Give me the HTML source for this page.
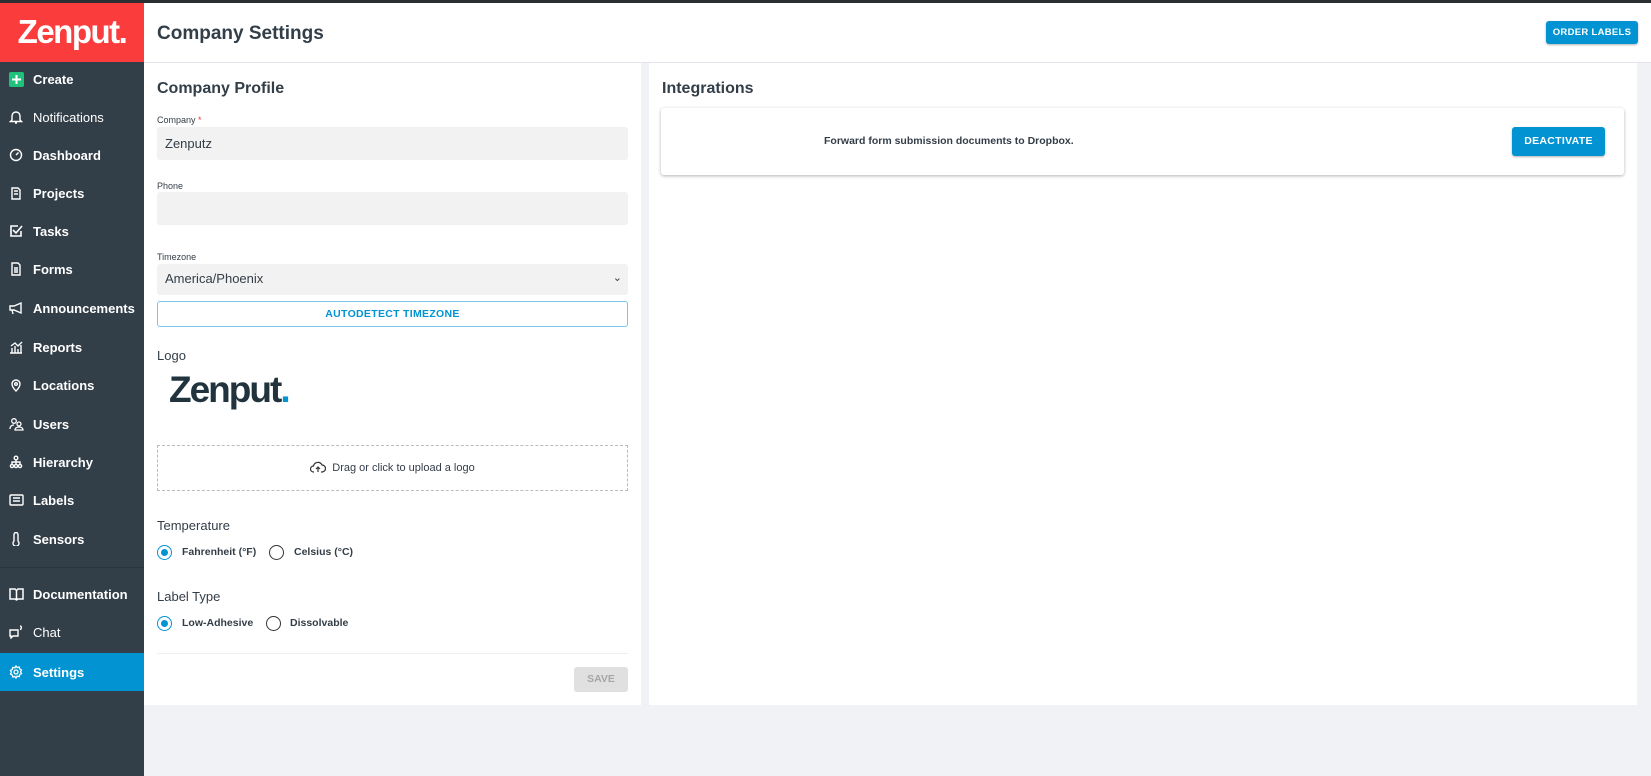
<!DOCTYPE html>
<html><head><meta charset="utf-8"><style>
*{box-sizing:border-box;margin:0;padding:0}
body{width:1651px;height:776px;overflow:hidden;background:#f1f2f5;font-family:"Liberation Sans",Arial,sans-serif;position:relative;color:#333d47}
.abs{position:absolute}
#top{left:0;top:0;width:1651px;height:3px;background:#2b2f33}
#side{left:0;top:3px;width:144px;height:773px;background:#323e48}
#logo{left:0;top:0;width:144px;height:59px;background:#fb3c3c;color:#fff;font-size:33px;font-weight:bold;letter-spacing:-1.5px;text-align:center;line-height:58px}
.nav{position:absolute;left:0;width:144px;height:38px;color:#fff;font-size:13px;font-weight:bold;line-height:40px;padding-left:33px}
.nav svg{position:absolute;left:9px;top:12px}
#hdr{left:144px;top:3px;width:1507px;height:60px;background:#fff;border-bottom:1px solid #e3e5ea}
h1{position:absolute;left:13px;top:20px;font-size:19px;font-weight:bold;color:#323e48}
.btn{position:absolute;background:#0293d2;color:#fff;font-size:10px;font-weight:bold;text-align:center;border-radius:3px;box-shadow:0 1px 2px rgba(0,0,0,.3);letter-spacing:.3px}
.panel{background:#fff}
.lbl{position:absolute;left:157px;font-size:9px;color:#333d47}
.inp{position:absolute;left:157px;width:471px;background:#f2f2f2;border-radius:3px;font-size:13px;padding-left:8px}
.h2{position:absolute;font-size:16px;font-weight:bold;color:#323e48}
.sec{position:absolute;left:157px;font-size:13px;color:#333d47}
.radio{position:absolute;width:15px;height:15px;border-radius:50%;border:1.5px solid #333}
.radio.on{border-color:#0293d2}
.radio.on::after{content:"";position:absolute;left:2.5px;top:2.5px;width:7px;height:7px;border-radius:50%;background:#0293d2}
.rl{position:absolute;font-size:10.5px;font-weight:bold;color:#333d47}
</style></head><body>
<div id="top" class="abs"></div>
<div id="side" class="abs">
<div id="logo" class="abs">Zenput.</div>
<div class="nav" style="top:57px"><svg width="15" height="15"><rect width="15" height="15" rx="2" fill="#1fc27a"/><path d="M7.5 3v9M3 7.5h9" stroke="#fff" stroke-width="2"/></svg>Create</div>
<div class="nav" style="top:95px;font-weight:normal"><svg width="14" height="14" fill="none" stroke="#fff" stroke-width="1.4"><path d="M3 10V6a4 4 0 0 1 8 0v4l1.5 1.5h-11zM6 13h2"/></svg>Notifications</div>
<div class="nav" style="top:133px"><svg width="14" height="14" fill="none" stroke="#fff" stroke-width="1.4"><circle cx="7" cy="7" r="5.5"/><path d="M7 7l2.5-2.5"/></svg>Dashboard</div>
<div class="nav" style="top:171px"><svg width="14" height="14" fill="none" stroke="#fff" stroke-width="1.4"><path d="M3 2h6l2 2v9H3zM5 5h4M5 8h4"/></svg>Projects</div>
<div class="nav" style="top:209px"><svg width="14" height="14" fill="none" stroke="#fff" stroke-width="1.6"><path d="M12 7v5H2V2h7M4 6l3 3 6-7"/></svg>Tasks</div>
<div class="nav" style="top:247px"><svg width="14" height="14" fill="none" stroke="#fff" stroke-width="1.4"><path d="M3 1h6l2 2v10H3zM5 6h4M5 8h4M5 10h4"/></svg>Forms</div>
<div class="nav" style="top:286px"><svg width="15" height="14" fill="none" stroke="#fff" stroke-width="1.4"><path d="M1 5h4l7-3v10L5 9H1zM3 9l1 4"/></svg>Announcements</div>
<div class="nav" style="top:325px"><svg width="14" height="14" fill="none" stroke="#fff" stroke-width="1.4"><path d="M1 13h12M3 13V8M6 13V6M9 13V9M12 13V5M2 6l4-3 3 3 4-4"/></svg>Reports</div>
<div class="nav" style="top:363px"><svg width="14" height="14" fill="none" stroke="#fff" stroke-width="1.4"><path d="M7 13s-4-4-4-7a4 4 0 0 1 8 0c0 3-4 7-4 7z"/><circle cx="7" cy="6" r="1.3"/></svg>Locations</div>
<div class="nav" style="top:402px"><svg width="15" height="14" fill="none" stroke="#fff" stroke-width="1.3"><circle cx="5" cy="4" r="2.3"/><circle cx="10" cy="7" r="2"/><path d="M1 12c0-3 2-4 4-4M6 13c0-2 2-3 4-3s4 1 4 3z"/></svg>Users</div>
<div class="nav" style="top:440px"><svg width="14" height="14" fill="none" stroke="#fff" stroke-width="1.4"><circle cx="7" cy="3" r="1.8"/><circle cx="3" cy="11" r="1.6"/><circle cx="7" cy="11" r="1.6"/><circle cx="11" cy="11" r="1.6"/><path d="M7 5v4M3 9V7h8v2"/></svg>Hierarchy</div>
<div class="nav" style="top:478px"><svg width="15" height="14" fill="none" stroke="#fff" stroke-width="1.4"><rect x="1" y="2" width="13" height="10" rx="1"/><path d="M4 5h7M4 8h7"/></svg>Labels</div>
<div class="nav" style="top:517px"><svg width="14" height="14" fill="none" stroke="#fff" stroke-width="1.4"><path d="M5 9V2.5a2 2 0 0 1 4 0V9a3 3 0 1 1-4 0z"/></svg>Sensors</div>
<div class="abs" style="left:0;top:564px;width:144px;height:1px;background:#2a343d"></div>
<div class="nav" style="top:572px"><svg width="15" height="14" fill="none" stroke="#fff" stroke-width="1.5"><path d="M1 2h5l1.5 1.5L9 2h5v10H9l-1.5 1L6 12H1zM7.5 3.5V12"/></svg>Documentation</div>
<div class="nav" style="top:610px;font-weight:normal"><svg width="15" height="14" fill="none" stroke="#fff" stroke-width="1.4"><path d="M1 5h8v6H4l-2 2V11H1zM11 1a1.5 1.5 0 0 1 1 2.5L11.5 5"/></svg>Chat</div>
<div class="nav" style="top:650px;background:#0293d2"><svg width="14" height="14" fill="none" stroke="#fff" stroke-width="1.3"><circle cx="7" cy="7" r="2"/><path d="M7 1l1.2 1.5 2-.5.5 2 1.8 1-1 1.8 1 1.8-1.8 1-.5 2-2-.5L7 13l-1.2-1.5-2 .5-.5-2-1.8-1 1-1.8-1-1.8 1.8-1 .5-2 2 .5z"/></svg>Settings</div>
</div>
<div id="hdr" class="abs"><h1>Company Settings</h1>
<div class="btn" style="left:1402px;top:18px;width:92px;height:23px;line-height:23px;font-size:9.5px">ORDER LABELS</div></div>
<div class="abs panel" style="left:144px;top:63px;width:497px;height:642px"></div>
<div class="abs panel" style="left:649px;top:63px;width:988px;height:642px"></div>
<div class="abs" style="left:1637px;top:63px;width:14px;height:642px;background:#f1f2f5"></div>
<div class="h2" style="left:157px;top:80px">Company Profile</div>
<div class="lbl" style="top:115px">Company <span style="color:#e33">*</span></div>
<div class="inp" style="top:127px;height:33px;line-height:33px">Zenputz</div>
<div class="lbl" style="top:181px">Phone</div>
<div class="inp" style="top:192px;height:33px"></div>
<div class="lbl" style="top:252px">Timezone</div>
<div class="inp" style="top:264px;height:31px;line-height:29px">America/Phoenix<span style="position:absolute;right:6px;font-size:11px">&#8964;</span></div>
<div class="abs" style="left:157px;top:301px;width:471px;height:26px;border:1px solid #7cc6e6;border-radius:3px;color:#0293d2;font-size:10.5px;font-weight:bold;text-align:center;line-height:24px;letter-spacing:.3px">AUTODETECT TIMEZONE</div>
<div class="sec" style="top:348px">Logo</div>
<div class="abs" style="left:169px;top:369px;font-size:37px;font-weight:bold;color:#21333d;letter-spacing:-2px">Zenput<span style="color:#0293d2">.</span></div>
<div class="abs" style="left:157px;top:445px;width:471px;height:46px;border:1px dashed #bbb;font-size:11px;text-align:center;line-height:44px;color:#333d47"><svg width="16" height="12" style="vertical-align:-2px;margin-right:6px" fill="none" stroke="#333" stroke-width="1.2"><path d="M4 11H3.5a3 3 0 0 1 0-6 4.5 4.5 0 0 1 8.5-1 3.5 3.5 0 0 1 0 7H11M8 11V6M6 8l2-2 2 2"/></svg>Drag or click to upload a logo</div>
<div class="sec" style="top:518px">Temperature</div>
<div class="radio on" style="left:157px;top:545px"></div><div class="rl" style="left:182px;top:546px">Fahrenheit (°F)</div>
<div class="radio" style="left:269px;top:545px"></div><div class="rl" style="left:294px;top:546px">Celsius (°C)</div>
<div class="sec" style="top:589px">Label Type</div>
<div class="radio on" style="left:157px;top:616px"></div><div class="rl" style="left:182px;top:617px">Low-Adhesive</div>
<div class="radio" style="left:266px;top:616px"></div><div class="rl" style="left:290px;top:617px">Dissolvable</div>
<div class="abs" style="left:157px;top:653px;width:471px;height:1px;background:#eee"></div>
<div class="abs" style="left:574px;top:667px;width:54px;height:25px;background:#e0e0e0;border-radius:3px;color:#a6a6a6;font-size:10.5px;font-weight:bold;text-align:center;line-height:25px">SAVE</div>
<div class="h2" style="left:662px;top:80px">Integrations</div>
<div class="abs" style="left:661px;top:108px;width:963px;height:67px;background:#fff;border-radius:3px;box-shadow:0 1px 3px rgba(0,0,0,.3)">
<div class="abs" style="left:163px;top:27px;font-size:10.5px;font-weight:bold;color:#333d47">Forward form submission documents to Dropbox.</div>
<div class="btn" style="left:851px;top:19px;width:93px;height:29px;line-height:29px;font-size:10.5px">DEACTIVATE</div>
</div>
</body></html>
